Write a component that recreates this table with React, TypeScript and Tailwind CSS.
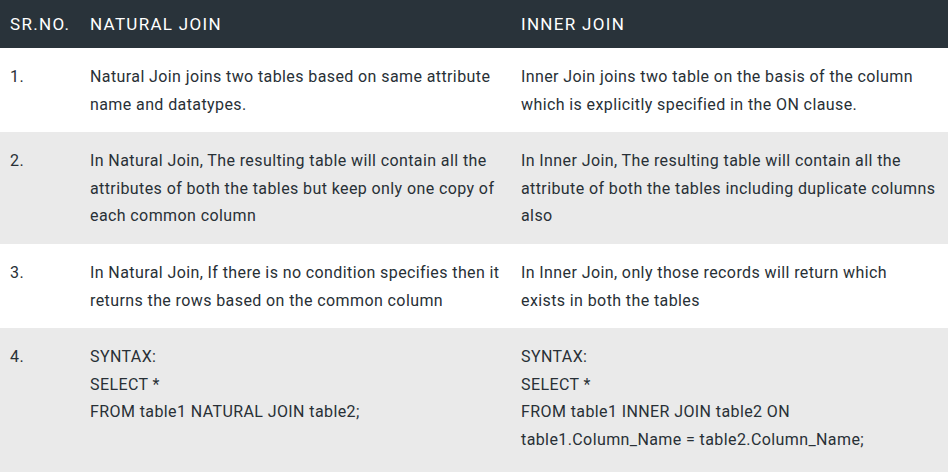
import React from 'react';

type Row = { no: string; natural: string[]; inner: string[] };

// lines are broken where the source table wraps them
const rows: Row[] = [
  {
    no: '1.',
    natural: ['Natural Join joins two tables based on same attribute', 'name and datatypes.'],
    inner: ['Inner Join joins two table on the basis of the column', 'which is explicitly specified in the ON clause.'],
  },
  {
    no: '2.',
    natural: [
      'In Natural Join, The resulting table will contain all the',
      'attributes of both the tables but keep only one copy of',
      'each common column',
    ],
    inner: [
      'In Inner Join, The resulting table will contain all the',
      'attribute of both the tables including duplicate columns',
      'also',
    ],
  },
  {
    no: '3.',
    natural: ['In Natural Join, If there is no condition specifies then it', 'returns the rows based on the common column'],
    inner: ['In Inner Join, only those records will return which', 'exists in both the tables'],
  },
  {
    no: '4.',
    natural: ['SYNTAX:', 'SELECT *', 'FROM table1 NATURAL JOIN table2;'],
    inner: ['SYNTAX:', 'SELECT *', 'FROM table1 INNER JOIN table2 ON', 'table1.Column_Name = table2.Column_Name;'],
  },
];

const Cell: React.FC<{ lines: string[]; last?: boolean }> = ({ lines, last }) => (
  <td className={`align-top px-[10px] pt-[15px] ${last ? 'pb-[28px]' : 'pb-[14px]'}`}>
    {lines.map((l, i) => (
      <div key={i} className="whitespace-nowrap">
        {l}
      </div>
    ))}
  </td>
);

const App: React.FC = () => {
  return (
    <div
      className="w-[948px] h-[472px] overflow-hidden bg-white text-[#283036] text-[16px] leading-[27.6px] tracking-[0.4px]"
      style={{ fontFamily: 'Roboto, "Liberation Sans", sans-serif' }}
    >
      <table className="w-full table-fixed border-collapse">
        <colgroup>
          <col className="w-[80px]" />
          <col className="w-[431px]" />
          <col />
        </colgroup>
        <thead>
          <tr className="bg-[#29333a] text-white h-[48px] text-[17px] tracking-[1.3px]">
            <th className="text-left font-normal px-[10px] pt-[2px]">SR.NO.</th>
            <th className="text-left font-normal px-[10px] pt-[2px]">NATURAL JOIN</th>
            <th className="text-left font-normal px-[10px] pt-[2px]">INNER JOIN</th>
          </tr>
        </thead>
        <tbody>
          {rows.map((r, i) => {
            const last = i === rows.length - 1;
            return (
              <tr key={r.no} className={i % 2 === 1 ? 'bg-[#eaeaea]' : 'bg-white'}>
                <Cell lines={[r.no]} last={last} />
                <Cell lines={r.natural} last={last} />
                <Cell lines={r.inner} last={last} />
              </tr>
            );
          })}
        </tbody>
      </table>
    </div>
  );
};

export default App;
